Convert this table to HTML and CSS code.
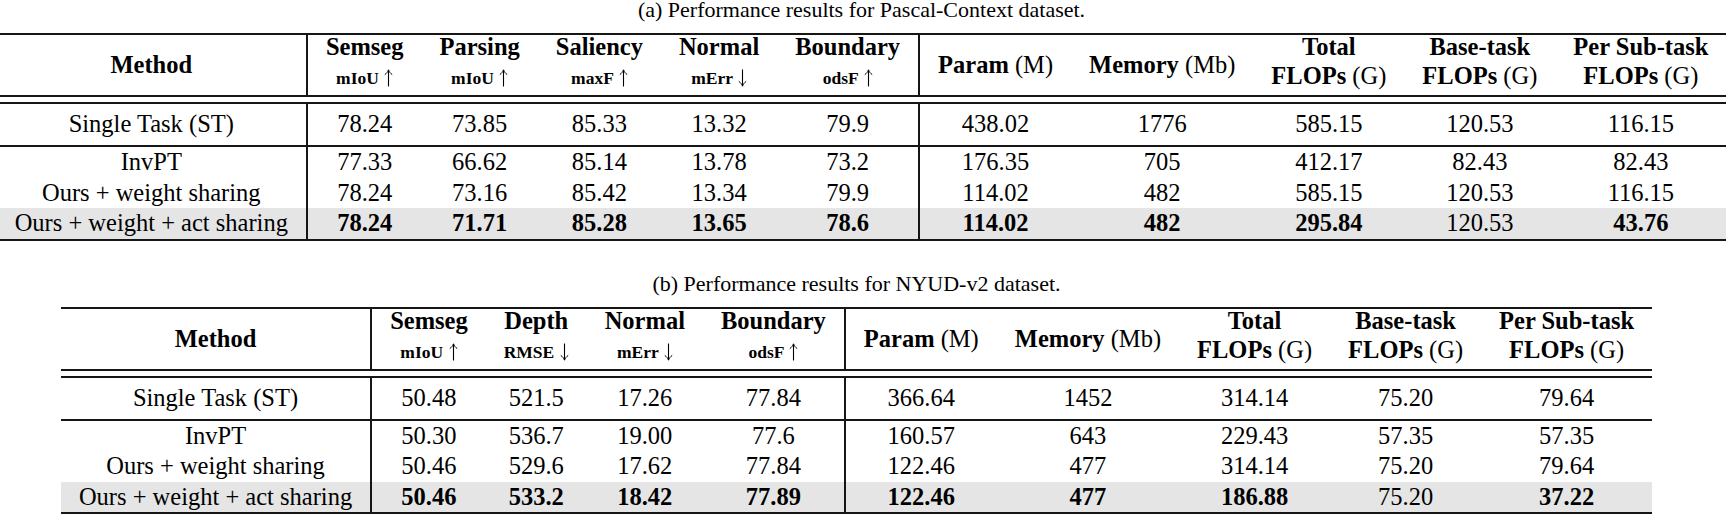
FILE: index.html
```html
<!DOCTYPE html>
<html lang="en">
<head>
<meta charset="utf-8">
<title>Performance results</title>
<link rel="stylesheet" href="styles.css">
</head>
<body>
<svg class="defs" width="0" height="0" aria-hidden="true">
  <defs>
    <symbol id="up" viewBox="0 0 9 18">
      <path d="M4.5 17.5V1.2" fill="none" stroke="#000" stroke-width="1.1"/>
      <path d="M0.8 5.6C2.6 4.3 3.9 2.8 4.5 0.8C5.1 2.8 6.4 4.3 8.2 5.6" fill="none" stroke="#000" stroke-width="1"/>
    </symbol>
    <symbol id="down" viewBox="0 0 9 18">
      <path d="M4.5 0.5V16.8" fill="none" stroke="#000" stroke-width="1.1"/>
      <path d="M0.8 12.4C2.6 13.7 3.9 15.2 4.5 17.2C5.1 15.2 6.4 13.7 8.2 12.4" fill="none" stroke="#000" stroke-width="1"/>
    </symbol>
  </defs>
</svg>
<div class="page">
  <section class="block block-a">
    <p class="caption">(a) Performance results for Pascal-Context dataset.</p>
    <table class="results">
      <thead>
        <tr class="head">
          <th class="mid vr">Method</th>
          <th><div class="h">Semseg</div><div class="s">mIoU <svg class="arr"><use href="#up"/></svg></div></th>
          <th><div class="h">Parsing</div><div class="s">mIoU <svg class="arr"><use href="#up"/></svg></div></th>
          <th><div class="h">Saliency</div><div class="s">maxF <svg class="arr"><use href="#up"/></svg></div></th>
          <th><div class="h">Normal</div><div class="s">mErr <svg class="arr"><use href="#down"/></svg></div></th>
          <th class="vr"><div class="h">Boundary</div><div class="s">odsF <svg class="arr"><use href="#up"/></svg></div></th>
          <th class="mid">Param <span class="u">(M)</span></th>
          <th class="mid">Memory <span class="u">(Mb)</span></th>
          <th><div class="h">Total</div><div class="h2">FLOPs <span class="u">(G)</span></div></th>
          <th><div class="h">Base-task</div><div class="h2">FLOPs <span class="u">(G)</span></div></th>
          <th><div class="h">Per Sub-task</div><div class="h2">FLOPs <span class="u">(G)</span></div></th>
        </tr>
        <tr class="gap"><td colspan="11"></td></tr>
      </thead>
      <tbody class="st">
        <tr>
          <td class="vr">Single Task (ST)</td>
          <td>78.24</td><td>73.85</td><td>85.33</td><td>13.32</td><td class="vr">79.9</td>
          <td>438.02</td><td>1776</td><td>585.15</td><td>120.53</td><td>116.15</td>
        </tr>
      </tbody>
      <tbody class="grp">
        <tr>
          <td class="vr">InvPT</td>
          <td>77.33</td><td>66.62</td><td>85.14</td><td>13.78</td><td class="vr">73.2</td>
          <td>176.35</td><td>705</td><td>412.17</td><td>82.43</td><td>82.43</td>
        </tr>
        <tr>
          <td class="vr">Ours + weight sharing</td>
          <td>78.24</td><td>73.16</td><td>85.42</td><td>13.34</td><td class="vr">79.9</td>
          <td>114.02</td><td>482</td><td>585.15</td><td>120.53</td><td>116.15</td>
        </tr>
        <tr class="best">
          <td class="vr">Ours + weight + act sharing</td>
          <td class="b">78.24</td><td class="b">71.71</td><td class="b">85.28</td><td class="b">13.65</td><td class="b vr">78.6</td>
          <td class="b">114.02</td><td class="b">482</td><td class="b">295.84</td><td>120.53</td><td class="b">43.76</td>
        </tr>
      </tbody>
    </table>
  </section>

  <section class="block block-b">
    <p class="caption">(b) Performance results for NYUD-v2 dataset.</p>
    <table class="results">
      <thead>
        <tr class="head">
          <th class="mid vr">Method</th>
          <th><div class="h">Semseg</div><div class="s">mIoU <svg class="arr"><use href="#up"/></svg></div></th>
          <th><div class="h">Depth</div><div class="s">RMSE <svg class="arr"><use href="#down"/></svg></div></th>
          <th><div class="h">Normal</div><div class="s">mErr <svg class="arr"><use href="#down"/></svg></div></th>
          <th class="vr"><div class="h">Boundary</div><div class="s">odsF <svg class="arr"><use href="#up"/></svg></div></th>
          <th class="mid">Param <span class="u">(M)</span></th>
          <th class="mid">Memory <span class="u">(Mb)</span></th>
          <th><div class="h">Total</div><div class="h2">FLOPs <span class="u">(G)</span></div></th>
          <th><div class="h">Base-task</div><div class="h2">FLOPs <span class="u">(G)</span></div></th>
          <th><div class="h">Per Sub-task</div><div class="h2">FLOPs <span class="u">(G)</span></div></th>
        </tr>
        <tr class="gap"><td colspan="10"></td></tr>
      </thead>
      <tbody class="st">
        <tr>
          <td class="vr">Single Task (ST)</td>
          <td>50.48</td><td>521.5</td><td>17.26</td><td class="vr">77.84</td>
          <td>366.64</td><td>1452</td><td>314.14</td><td>75.20</td><td>79.64</td>
        </tr>
      </tbody>
      <tbody class="grp">
        <tr>
          <td class="vr">InvPT</td>
          <td>50.30</td><td>536.7</td><td>19.00</td><td class="vr">77.6</td>
          <td>160.57</td><td>643</td><td>229.43</td><td>57.35</td><td>57.35</td>
        </tr>
        <tr>
          <td class="vr">Ours + weight sharing</td>
          <td>50.46</td><td>529.6</td><td>17.62</td><td class="vr">77.84</td>
          <td>122.46</td><td>477</td><td>314.14</td><td>75.20</td><td>79.64</td>
        </tr>
        <tr class="best">
          <td class="vr">Ours + weight + act sharing</td>
          <td class="b">50.46</td><td class="b">533.2</td><td class="b">18.42</td><td class="b vr">77.89</td>
          <td class="b">122.46</td><td class="b">477</td><td class="b">186.88</td><td>75.20</td><td class="b">37.22</td>
        </tr>
      </tbody>
    </table>
  </section>
</div>
</body>
</html>
```

FILE: styles.css
```css
html, body {
  margin: 0;
  padding: 0;
  background: #ffffff;
}

body {
  font-family: "Liberation Serif", "Times New Roman", "DejaVu Serif", serif;
  color: #000000;
}

.defs {
  position: absolute;
  width: 0;
  height: 0;
  overflow: hidden;
}

.page {
  width: 1728px;
  display: flex;
  flex-direction: column;
  align-items: center;
}

.block {
  display: flex;
  flex-direction: column;
  align-items: center;
}

.block-a {
  margin-right: 5px;
}

.block-b {
  margin-top: 33px;
  margin-right: 15px;
}

.caption {
  margin: 0 0 13px;
  font-size: 22px;
  line-height: 20px;
  white-space: nowrap;
}

.results {
  border-collapse: separate;
  border-spacing: 0;
  font-size: 24.5px;
  white-space: nowrap;
}

.results th,
.results td {
  padding: 0 18px;
  text-align: center;
}

/* header */
.results .head th {
  height: 60px;
  vertical-align: top;
  border-top: 2px solid #161616;
  font-weight: bold;
}

.results .head th.mid {
  vertical-align: middle;
  line-height: 24px;
}

.results .h,
.results .h2 {
  line-height: 24px;
}

.results .h2 {
  margin-top: 5px;
}

.results .s {
  margin-top: 9px;
  font-size: 17.5px;
  line-height: 20px;
}

.results .arr {
  width: 9px;
  height: 18px;
  margin-left: 1px;
  vertical-align: -3px;
}

.results .u {
  font-weight: normal;
}

/* double rule */
.results .gap td {
  height: 5px;
  padding: 0;
  border-top: 2px solid #161616;
  border-bottom: 2px solid #161616;
}

/* single task row */
.results .st td {
  line-height: 30px;
  padding-top: 5px;
  padding-bottom: 6px;
}

/* grouped rows */
.results .grp td {
  line-height: 30.5px;
}

.results .grp tr:first-child td {
  border-top: 2px solid #161616;
}

.results .grp tr:last-child td {
  border-bottom: 2px solid #161616;
}

.results .best td {
  background: #e5e5e5;
}

.results .b {
  font-weight: bold;
}

.results .vr {
  border-right: 2px solid #161616;
}
```
